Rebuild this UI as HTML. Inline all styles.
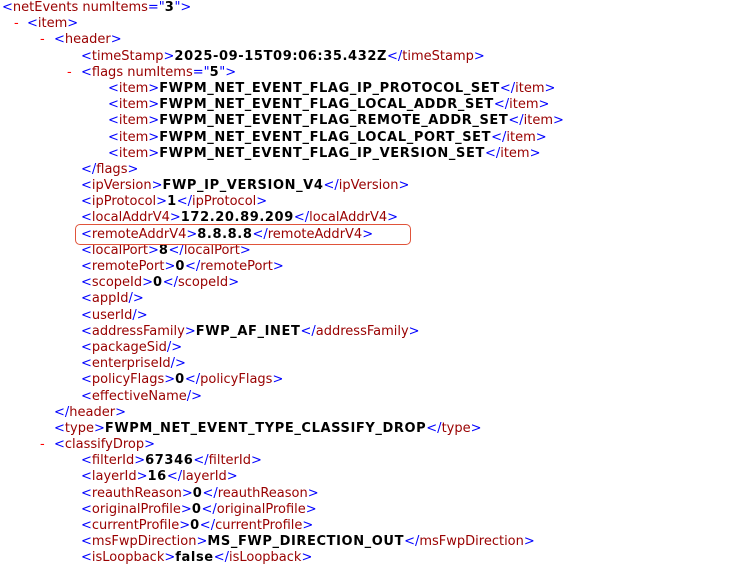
<html><head><style>
body{margin:0;background:#fff;width:754px;height:568px;overflow:hidden;position:relative}
#c{position:absolute;top:0px;left:0;font-family:"DejaVu Sans",Verdana,sans-serif;font-size:13px;line-height:16.2px;white-space:nowrap}
.l{position:relative;height:16.2px}
.b{color:#0000ff}.t{color:#990000}.v{font-weight:bold;color:#000;letter-spacing:0.6px}.m{color:#ff0000;position:absolute}
#box{position:absolute;left:75px;top:224px;width:334px;height:19px;border:1.5px solid #e0533a;border-radius:5px}
</style></head><body>
<div id="c"><div class="l" style="padding-left:2px"><span class="b">&lt;</span><span class="t">netEvents numItems</span><span class="b">="</span><span class="v">3</span><span class="b">"&gt;</span></div><div class="l" style="padding-left:27px"><span class="m" style="left:14px">-</span><span class="b">&lt;</span><span class="t">item</span><span class="b">&gt;</span></div><div class="l" style="padding-left:54px"><span class="m" style="left:40px">-</span><span class="b">&lt;</span><span class="t">header</span><span class="b">&gt;</span></div><div class="l" style="padding-left:81px"><span class="b">&lt;</span><span class="t">timeStamp</span><span class="b">&gt;</span><span class="v">2025-09-15T09:06:35.432Z</span><span class="b">&lt;/</span><span class="t">timeStamp</span><span class="b">&gt;</span></div><div class="l" style="padding-left:81px"><span class="m" style="left:67px">-</span><span class="b">&lt;</span><span class="t">flags numItems</span><span class="b">="</span><span class="v">5</span><span class="b">"&gt;</span></div><div class="l" style="padding-left:108px"><span class="b">&lt;</span><span class="t">item</span><span class="b">&gt;</span><span class="v">FWPM_NET_EVENT_FLAG_IP_PROTOCOL_SET</span><span class="b">&lt;/</span><span class="t">item</span><span class="b">&gt;</span></div><div class="l" style="padding-left:108px"><span class="b">&lt;</span><span class="t">item</span><span class="b">&gt;</span><span class="v">FWPM_NET_EVENT_FLAG_LOCAL_ADDR_SET</span><span class="b">&lt;/</span><span class="t">item</span><span class="b">&gt;</span></div><div class="l" style="padding-left:108px"><span class="b">&lt;</span><span class="t">item</span><span class="b">&gt;</span><span class="v">FWPM_NET_EVENT_FLAG_REMOTE_ADDR_SET</span><span class="b">&lt;/</span><span class="t">item</span><span class="b">&gt;</span></div><div class="l" style="padding-left:108px"><span class="b">&lt;</span><span class="t">item</span><span class="b">&gt;</span><span class="v">FWPM_NET_EVENT_FLAG_LOCAL_PORT_SET</span><span class="b">&lt;/</span><span class="t">item</span><span class="b">&gt;</span></div><div class="l" style="padding-left:108px"><span class="b">&lt;</span><span class="t">item</span><span class="b">&gt;</span><span class="v">FWPM_NET_EVENT_FLAG_IP_VERSION_SET</span><span class="b">&lt;/</span><span class="t">item</span><span class="b">&gt;</span></div><div class="l" style="padding-left:81px"><span class="b">&lt;/</span><span class="t">flags</span><span class="b">&gt;</span></div><div class="l" style="padding-left:81px"><span class="b">&lt;</span><span class="t">ipVersion</span><span class="b">&gt;</span><span class="v">FWP_IP_VERSION_V4</span><span class="b">&lt;/</span><span class="t">ipVersion</span><span class="b">&gt;</span></div><div class="l" style="padding-left:81px"><span class="b">&lt;</span><span class="t">ipProtocol</span><span class="b">&gt;</span><span class="v">1</span><span class="b">&lt;/</span><span class="t">ipProtocol</span><span class="b">&gt;</span></div><div class="l" style="padding-left:81px"><span class="b">&lt;</span><span class="t">localAddrV4</span><span class="b">&gt;</span><span class="v">172.20.89.209</span><span class="b">&lt;/</span><span class="t">localAddrV4</span><span class="b">&gt;</span></div><div class="l" style="padding-left:81px"><span class="b">&lt;</span><span class="t">remoteAddrV4</span><span class="b">&gt;</span><span class="v">8.8.8.8</span><span class="b">&lt;/</span><span class="t">remoteAddrV4</span><span class="b">&gt;</span></div><div class="l" style="padding-left:81px"><span class="b">&lt;</span><span class="t">localPort</span><span class="b">&gt;</span><span class="v">8</span><span class="b">&lt;/</span><span class="t">localPort</span><span class="b">&gt;</span></div><div class="l" style="padding-left:81px"><span class="b">&lt;</span><span class="t">remotePort</span><span class="b">&gt;</span><span class="v">0</span><span class="b">&lt;/</span><span class="t">remotePort</span><span class="b">&gt;</span></div><div class="l" style="padding-left:81px"><span class="b">&lt;</span><span class="t">scopeId</span><span class="b">&gt;</span><span class="v">0</span><span class="b">&lt;/</span><span class="t">scopeId</span><span class="b">&gt;</span></div><div class="l" style="padding-left:81px"><span class="b">&lt;</span><span class="t">appId</span><span class="b">/&gt;</span></div><div class="l" style="padding-left:81px"><span class="b">&lt;</span><span class="t">userId</span><span class="b">/&gt;</span></div><div class="l" style="padding-left:81px"><span class="b">&lt;</span><span class="t">addressFamily</span><span class="b">&gt;</span><span class="v">FWP_AF_INET</span><span class="b">&lt;/</span><span class="t">addressFamily</span><span class="b">&gt;</span></div><div class="l" style="padding-left:81px"><span class="b">&lt;</span><span class="t">packageSid</span><span class="b">/&gt;</span></div><div class="l" style="padding-left:81px"><span class="b">&lt;</span><span class="t">enterpriseId</span><span class="b">/&gt;</span></div><div class="l" style="padding-left:81px"><span class="b">&lt;</span><span class="t">policyFlags</span><span class="b">&gt;</span><span class="v">0</span><span class="b">&lt;/</span><span class="t">policyFlags</span><span class="b">&gt;</span></div><div class="l" style="padding-left:81px"><span class="b">&lt;</span><span class="t">effectiveName</span><span class="b">/&gt;</span></div><div class="l" style="padding-left:54px"><span class="b">&lt;/</span><span class="t">header</span><span class="b">&gt;</span></div><div class="l" style="padding-left:54px"><span class="b">&lt;</span><span class="t">type</span><span class="b">&gt;</span><span class="v">FWPM_NET_EVENT_TYPE_CLASSIFY_DROP</span><span class="b">&lt;/</span><span class="t">type</span><span class="b">&gt;</span></div><div class="l" style="padding-left:54px"><span class="m" style="left:40px">-</span><span class="b">&lt;</span><span class="t">classifyDrop</span><span class="b">&gt;</span></div><div class="l" style="padding-left:81px"><span class="b">&lt;</span><span class="t">filterId</span><span class="b">&gt;</span><span class="v">67346</span><span class="b">&lt;/</span><span class="t">filterId</span><span class="b">&gt;</span></div><div class="l" style="padding-left:81px"><span class="b">&lt;</span><span class="t">layerId</span><span class="b">&gt;</span><span class="v">16</span><span class="b">&lt;/</span><span class="t">layerId</span><span class="b">&gt;</span></div><div class="l" style="padding-left:81px"><span class="b">&lt;</span><span class="t">reauthReason</span><span class="b">&gt;</span><span class="v">0</span><span class="b">&lt;/</span><span class="t">reauthReason</span><span class="b">&gt;</span></div><div class="l" style="padding-left:81px"><span class="b">&lt;</span><span class="t">originalProfile</span><span class="b">&gt;</span><span class="v">0</span><span class="b">&lt;/</span><span class="t">originalProfile</span><span class="b">&gt;</span></div><div class="l" style="padding-left:81px"><span class="b">&lt;</span><span class="t">currentProfile</span><span class="b">&gt;</span><span class="v">0</span><span class="b">&lt;/</span><span class="t">currentProfile</span><span class="b">&gt;</span></div><div class="l" style="padding-left:81px"><span class="b">&lt;</span><span class="t">msFwpDirection</span><span class="b">&gt;</span><span class="v">MS_FWP_DIRECTION_OUT</span><span class="b">&lt;/</span><span class="t">msFwpDirection</span><span class="b">&gt;</span></div><div class="l" style="padding-left:81px"><span class="b">&lt;</span><span class="t">isLoopback</span><span class="b">&gt;</span><span class="v">false</span><span class="b">&lt;/</span><span class="t">isLoopback</span><span class="b">&gt;</span></div></div>
<div id="box"></div>
</body></html>
